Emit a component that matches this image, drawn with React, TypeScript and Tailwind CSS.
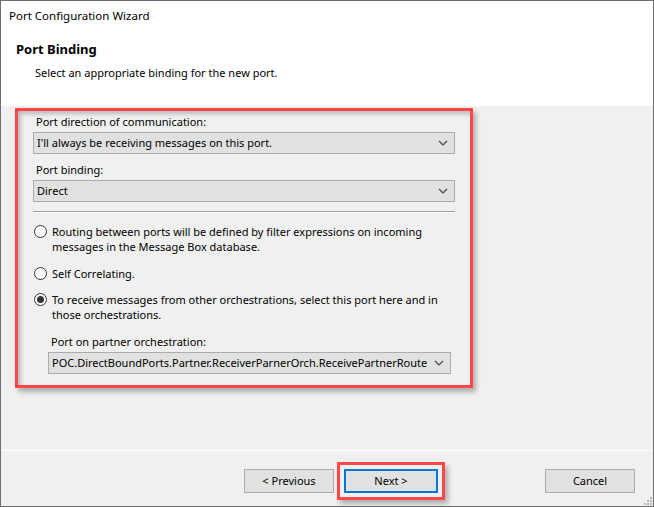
import React from "react"

const font = { fontFamily: '"Noto Sans", "Liberation Sans", sans-serif' }

function Chevron() {
  return (
    <svg width="10" height="6" viewBox="0 0 10 6" className="shrink-0">
      <path d="M1 1 L5 5 L9 1" fill="none" stroke="#444" strokeWidth="1.2" />
    </svg>
  )
}

function Combo({ value, className }: { value: string; className: string }) {
  return (
    <div className={`flex h-[22px] items-center border border-[#adadad] bg-[#e1e1e1] pl-[3px] pr-[6px] ${className}`}>
      <span className="min-w-0 flex-1 overflow-hidden whitespace-nowrap pr-[4px]">{value}</span>
      <Chevron />
    </div>
  )
}

function Radio({ checked, lines, className }: { checked?: boolean; lines: string[]; className: string }) {
  return (
    <div className={`flex items-start ${className}`}>
      <div className="ml-[1px] mt-[1px] flex h-[13px] w-[13px] shrink-0 items-center justify-center rounded-full border border-[#333] bg-white">
        {checked ? <div className="h-[7px] w-[7px] rounded-full bg-[#333]" /> : null}
      </div>
      <div className="ml-[5px] leading-[15px]">
        {lines.map((l) => (
          <div key={l} className="whitespace-nowrap">{l}</div>
        ))}
      </div>
    </div>
  )
}

function Button({ label, focused }: { label: string; focused?: boolean }) {
  return (
    <div
      className={`flex h-[24px] items-center justify-center bg-[#e1e1e1] ${
        focused ? "w-[94px] border-2 border-[#0078d7]" : "w-[90px] border border-[#adadad]"
      }`}
    >
      {label}
    </div>
  )
}

export default function App() {
  return (
    <div style={font} className="flex h-[507px] w-[654px] flex-col border border-[#6e6e6e] bg-[#f0f0f0] text-[11px] text-black">
      <div className="h-[105px] shrink-0 bg-white">
        <div className="pl-[8px] pt-[7px] text-[11.5px] leading-[16px]">Port Configuration Wizard</div>
        <div className="pl-[15px] pt-[17px] text-[13px] font-bold leading-[16px]">Port Binding</div>
        <div className="pl-[34px] pt-[8px] leading-[16px]">Select an appropriate binding for the new port.</div>
      </div>

      <div className="ml-[14px] mt-[2px] h-[280px] w-[458px] border-[3px] border-[#ff4747] shadow-[3px_4px_5px_rgba(0,0,0,0.28),inset_3px_3px_4px_rgba(0,0,0,0.22)]">
        <div className="flex flex-col pl-[15px] pr-[15px]">
          <div className="ml-[3px] mt-[3px] leading-[16px]">Port direction of communication:</div>
          <Combo className="mt-[2px]" value="I'll always be receiving messages on this port." />
          <div className="ml-[3px] mt-[8px] leading-[16px]">Port binding:</div>
          <Combo className="mt-[2px]" value="Direct" />
          <div className="mt-[9px] h-[2px] border-t border-b border-t-[#a0a0a0] border-b-white" />
          <Radio
            className="mt-[11px]"
            lines={["Routing between ports will be defined by filter expressions on incoming", "messages in the Message Box database."]}
          />
          <Radio className="mt-[12px]" lines={["Self Correlating."]} />
          <Radio
            checked
            className="mt-[11px]"
            lines={["To receive messages from other orchestrations, select this port here and in", "those orchestrations."]}
          />
          <div className="ml-[18px] mt-[12px] leading-[16px]">Port on partner orchestration:</div>
          <Combo className="ml-[15px] mr-[4px] mt-[2px]" value="POC.DirectBoundPorts.Partner.ReceiverParnerOrch.ReceivePartnerRoute" />
        </div>
      </div>

      <div className="flex-1" />
      <div className="h-px bg-white" />
      <div className="relative flex h-[55px] items-start pl-[243px] pt-[18px]">
        <Button label="< Previous" />
        <div className="ml-[3px] -mt-[7px] border-[3px] border-[#ff4747] px-[4px] py-[4px] shadow-[3px_4px_5px_rgba(0,0,0,0.28)]">
          <Button label="Next >" focused />
        </div>
        <div className="ml-[100px]">
          <Button label="Cancel" />
        </div>
        <svg className="absolute bottom-[1px] right-[1px]" width="10" height="10" viewBox="0 0 10 10">
          {[
            [8, 2],
            [5, 5],
            [8, 5],
            [2, 8],
            [5, 8],
            [8, 8],
          ].map(([x, y]) => (
            <rect key={`${x}-${y}`} x={x} y={y} width="2" height="2" fill="#b8b8b8" />
          ))}
        </svg>
      </div>
    </div>
  )
}
